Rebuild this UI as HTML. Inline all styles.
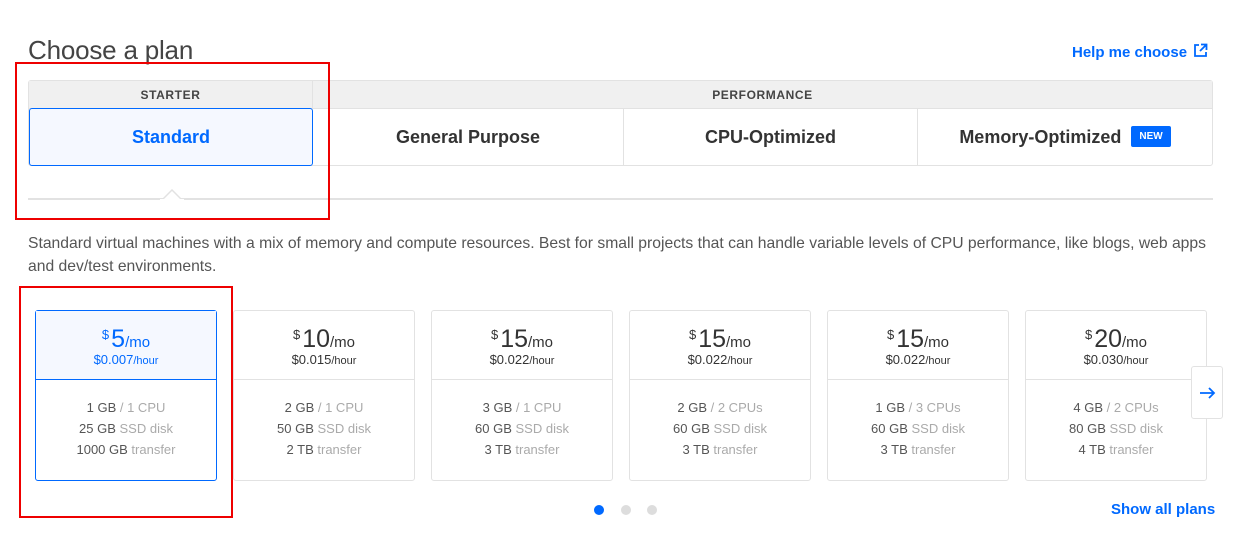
<!DOCTYPE html>
<html><head><style>
*{box-sizing:border-box;margin:0;padding:0}
body{width:1248px;height:551px;background:#fff;font-family:"Liberation Sans",sans-serif;position:relative;overflow:hidden;color:#333}
.a{position:absolute}
h1{position:absolute;left:28px;top:35px;font-size:26px;font-weight:normal;color:#444;letter-spacing:-0.2px}
.help{left:1072px;top:43px;color:#0069ff;font-weight:bold;font-size:15px}
.tabs{left:28px;top:80px;width:1185px;height:86px;border:1px solid #e2e2e2;border-radius:3px}
.hdr{position:absolute;top:0;height:28px;background:#f0f0f0;font-size:12px;font-weight:bold;color:#444;letter-spacing:.6px;text-align:center;line-height:28px;border-bottom:1px solid #e2e2e2}
.tab{position:absolute;top:28px;height:57px;line-height:56px;text-align:center;font-size:18px;font-weight:bold;color:#333}
.sel{left:0;width:284px;top:27px;height:58px;border:1px solid #0069ff;border-radius:3px;background:#f5f8ff;color:#0069ff}
.new{display:inline-block;background:#0069ff;color:#fff;font-size:10px;line-height:21px;padding:0 8px;border-radius:2px;vertical-align:middle;margin-left:10px;position:relative;top:-2px}
.desc{left:28px;top:232px;font-size:15.7px;line-height:23px;color:#555;width:1195px}
.card{position:absolute;top:310px;width:182px;height:171px;border:1px solid #e2e2e2;border-radius:3px;text-align:center}
.card .top{height:69px;border-bottom:1px solid #e2e2e2;padding-top:14px}
.p{font-size:15px;color:#333}.p b{font-size:25px;font-weight:normal;}.p sup{font-size:13px;vertical-align:8px;margin-right:2px}
.h{font-size:13px;margin-top:-2px}.h small{font-size:11px}
.sp{padding-top:17px;font-size:13px;line-height:21px;color:#555}.sp span{color:#aaa}
.card.s{border-color:#0069ff}.card.s .top{background:#f5f8ff;border-color:#0069ff}
.card.s .p,.card.s .h{color:#0069ff}
.red{position:absolute;border:2px solid #e00}
.dot{position:absolute;top:505px;width:10px;height:10px;border-radius:50%;background:#ddd}
</style></head><body>
<h1>Choose a plan</h1>
<div class="a help">Help me choose <svg width="15" height="15" viewBox="0 0 15 15" style="vertical-align:-1px;margin-left:2px" fill="none" stroke="#0069ff" stroke-width="1.8"><path d="M6 2H2v11h11V9"/><path d="M8 1.5h5.5V7M13.5 1.5L7 8"/></svg></div>
<div class="a tabs">
 <div class="hdr" style="left:0;width:284px;border-right:1px solid #e2e2e2">STARTER</div>
 <div class="hdr" style="left:284px;right:0">PERFORMANCE</div>
 <div class="tab sel">Standard</div>
 <div class="tab" style="left:284px;width:311px;border-right:1px solid #e2e2e2">General Purpose</div>
 <div class="tab" style="left:595px;width:294px;border-right:1px solid #e2e2e2">CPU-Optimized</div>
 <div class="tab" style="left:889px;width:294px">Memory-Optimized<span class="new">NEW</span></div>
</div>
<div class="a" style="left:28px;top:198px;width:1185px;height:2px;background:#e2e2e2"></div>
<div class="a" style="left:162px;top:188px;width:20px;height:20px;"><svg width="20" height="12" viewBox="0 0 20 12"><path d="M0 11L10 1L20 11" fill="#fff" stroke="#e2e2e2" stroke-width="1.5"/></svg></div>
<div class="a" style="left:160px;top:199px;width:24px;height:3px;background:#fff"></div>
<div class="a desc">Standard virtual machines with a mix of memory and compute resources. Best for small projects that can handle variable levels of CPU performance, like blogs, web apps and dev/test environments.</div>

<div class="card s" style="left:35px"><div class="top"><div class="p"><sup>$</sup><b>5</b>/mo</div><div class="h">$0.007<small>/hour</small></div></div><div class="sp">1 GB <span>/ 1 CPU</span><br>25 GB <span>SSD disk</span><br>1000 GB <span>transfer</span></div></div>
<div class="card" style="left:233px"><div class="top"><div class="p"><sup>$</sup><b>10</b>/mo</div><div class="h">$0.015<small>/hour</small></div></div><div class="sp">2 GB <span>/ 1 CPU</span><br>50 GB <span>SSD disk</span><br>2 TB <span>transfer</span></div></div>
<div class="card" style="left:431px"><div class="top"><div class="p"><sup>$</sup><b>15</b>/mo</div><div class="h">$0.022<small>/hour</small></div></div><div class="sp">3 GB <span>/ 1 CPU</span><br>60 GB <span>SSD disk</span><br>3 TB <span>transfer</span></div></div>
<div class="card" style="left:629px"><div class="top"><div class="p"><sup>$</sup><b>15</b>/mo</div><div class="h">$0.022<small>/hour</small></div></div><div class="sp">2 GB <span>/ 2 CPUs</span><br>60 GB <span>SSD disk</span><br>3 TB <span>transfer</span></div></div>
<div class="card" style="left:827px"><div class="top"><div class="p"><sup>$</sup><b>15</b>/mo</div><div class="h">$0.022<small>/hour</small></div></div><div class="sp">1 GB <span>/ 3 CPUs</span><br>60 GB <span>SSD disk</span><br>3 TB <span>transfer</span></div></div>
<div class="card" style="left:1025px"><div class="top"><div class="p"><sup>$</sup><b>20</b>/mo</div><div class="h">$0.030<small>/hour</small></div></div><div class="sp">4 GB <span>/ 2 CPUs</span><br>80 GB <span>SSD disk</span><br>4 TB <span>transfer</span></div></div>

<div class="a" style="left:1191px;top:366px;width:32px;height:53px;border:1px solid #e2e2e2;border-radius:3px;background:#fff"><svg width="30" height="51" viewBox="0 0 30 51" fill="none" stroke="#0069ff" stroke-width="1.8"><path d="M8 26h14M17 21l5 5-5 5"/></svg></div>

<div class="dot" style="left:594px;background:#0069ff"></div>
<div class="dot" style="left:621px"></div>
<div class="dot" style="left:647px"></div>
<div class="a" style="left:1111px;top:501px;color:#0069ff;font-weight:bold;font-size:15px">Show all plans</div>

<div class="red" style="left:15px;top:62px;width:315px;height:158px"></div>
<div class="red" style="left:19px;top:286px;width:214px;height:232px"></div>
</body></html>
